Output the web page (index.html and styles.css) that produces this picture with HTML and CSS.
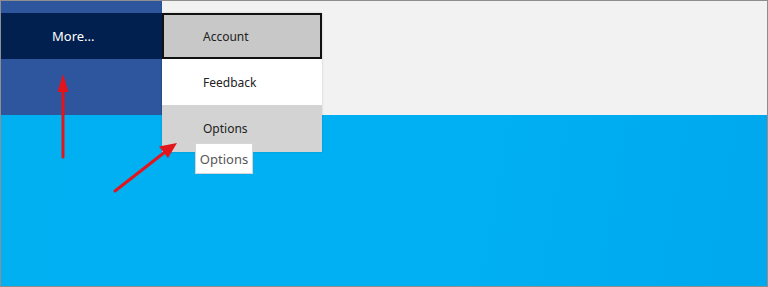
FILE: index.html
```html
<!DOCTYPE html>
<html lang="en">
<head>
<meta charset="utf-8">
<title>More menu</title>
<link rel="stylesheet" href="styles.css">
</head>
<body>
<div class="frame">
  <div class="top">
    <nav class="sidebar">
      <div class="more">More...</div>
    </nav>
    <div class="content"></div>
  </div>
  <div class="desktop"></div>

  <ul class="menu">
    <li class="item focused">Account</li>
    <li class="item">Feedback</li>
    <li class="item hover">Options</li>
  </ul>
  <div class="tooltip">Options</div>

  <svg class="arrows" width="768" height="287" viewBox="0 0 768 287">
    <line x1="63" y1="157" x2="63" y2="88" stroke="#e3141c" stroke-width="3" stroke-linecap="round"/>
    <polygon points="63,74 57.5,92 68.5,92" fill="#e3141c"/>
    <line x1="115" y1="191" x2="165" y2="152" stroke="#e3141c" stroke-width="3" stroke-linecap="round"/>
    <polygon points="177,143 159,146.5 168,158" fill="#e3141c"/>
  </svg>
</div>
</body>
</html>
```
FILE: styles.css
```css
html, body {
  margin: 0;
  padding: 0;
}
body {
  font-family: "Noto Sans", "Open Sans", sans-serif;
}
.frame {
  position: relative;
  width: 768px;
  height: 287px;
  box-sizing: border-box;
  border: 1px solid #8e8e8e;
  display: flex;
  flex-direction: column;
  background: #00aff0;
  overflow: hidden;
}
.top {
  display: flex;
  height: 114px;
  flex: none;
}
.sidebar {
  width: 161px;
  flex: none;
  background: #2d569f;
  padding-top: 12px;
  box-sizing: border-box;
}
.more {
  height: 46px;
  background: #011f4f;
  color: #ffffff;
  font-size: 13px;
  display: flex;
  align-items: center;
  padding-left: 51px;
}
.content {
  flex: 1;
  background: #f2f2f2;
  box-shadow: 0 1px 1px rgba(0, 60, 100, 0.6);
}
.desktop {
  flex: 1;
  background: linear-gradient(100deg, #00b0f1 0%, #00b0f2 60%, #00a8ed 100%);
}
.menu {
  position: absolute;
  left: 161px;
  top: 12px;
  width: 160px;
  margin: 0;
  padding: 0;
  list-style: none;
  background: #ffffff;
  box-shadow: 0 0 2px rgba(0, 0, 0, 0.18);
}
.item {
  height: 46px;
  box-sizing: border-box;
  display: flex;
  align-items: center;
  padding-left: 41px;
  font-size: 12px;
  color: #222222;
}
.item.focused {
  background: #c8c8c8;
  border: 2px solid #111111;
  padding-left: 39px;
}
.item.hover {
  background: #d3d3d3;
  height: 47px;
}
.tooltip {
  position: absolute;
  left: 194px;
  top: 142px;
  width: 58px;
  height: 31px;
  box-sizing: border-box;
  background: #ffffff;
  border: 1px solid #d6d6d6;
  color: #575757;
  font-size: 13px;
  display: flex;
  align-items: center;
  justify-content: center;
}
.arrows {
  position: absolute;
  left: -1px;
  top: -1px;
}
```
